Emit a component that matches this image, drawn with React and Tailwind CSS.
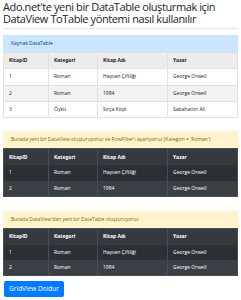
const kaynak = [
  ['1', 'Roman', 'Hayvan Çiftliği', 'George Orwell'],
  ['2', 'Roman', '1984', 'George Orwell'],
  ['3', 'Öykü', 'Sırça Köşk', 'Sabahattin Ali'],
]

const roman = kaynak.slice(0, 2)

const cols = ['KitapID', 'Kategori', 'Kitap Adı', 'Yazar']
const widths = ['w-[45px]', 'w-[49px]', 'w-[70px]', '']

function LightTable({ rows }) {
  return (
    <table className="w-full border-collapse border border-[#dee2e6] text-[5px] text-[#212529] table-fixed">
      <thead>
        <tr className="h-[16px] bg-[#ececec]">
          {cols.map((c, i) => (
            <th key={c} className={`${widths[i]} border border-[#dee2e6] px-[5px] text-left font-bold`}>{c}</th>
          ))}
        </tr>
      </thead>
      <tbody>
        {rows.map((r, idx) => (
          <tr key={idx} className={idx % 2 === 1 ? 'h-[16.3px] bg-[#f2f2f2]' : 'h-[16.3px] bg-white'}>
            {r.map((v, i) => (
              <td key={i} className="border border-[#dee2e6] px-[5px]">{v}</td>
            ))}
          </tr>
        ))}
      </tbody>
    </table>
  )
}

function DarkTable({ rows }) {
  return (
    <table className="w-full border-collapse border border-[#454d55] text-[5px] text-white table-fixed">
      <thead>
        <tr className="h-[16.5px] bg-[#343a40]">
          {cols.map((c, i) => (
            <th key={c} className={`${widths[i]} border-x border-[#454d55] px-[5px] text-left font-bold`}>{c}</th>
          ))}
        </tr>
      </thead>
      <tbody>
        {rows.map((r, idx) => (
          <tr key={idx} className={idx % 2 === 0 ? 'h-[15.5px] bg-[#2c3035]' : 'h-[15.5px] bg-[#3a3f45]'}>
            {r.map((v, i) => (
              <td key={i} className="border-x border-[#454d55] px-[5px]">{v}</td>
            ))}
          </tr>
        ))}
      </tbody>
    </table>
  )
}

export default function App() {
  return (
    <div className="w-[241px] h-[300px] bg-white px-[3px] font-['Open_Sans',sans-serif] overflow-hidden">
      <h2 className="pt-[1px] text-[11px] leading-[11.7px] font-medium text-[#212529] tracking-[-0.4px]">
        Ado.net'te yeni bir DataTable oluşturmak için DataView ToTable yöntemi nasıl kullanılır
      </h2>
      <hr className="mt-[4px] mb-[6px] border-t border-[#dfe6ee]" />

      <div className="h-[17px] flex items-center px-[8px] bg-[#cce5ff] text-[#004085] text-[5px] rounded-t-[1px]">
        Kaynak DataTable
      </div>
      <LightTable rows={kaynak} />

      <div className="mt-[13px] h-[17px] flex items-center px-[8px] bg-[#fff3cd] text-[#856404] text-[5px]">
        Burada yeni bir DataView oluşturuyoruz ve RowFilter'ı ayarlıyoruz (Kategori = 'Roman')
      </div>
      <DarkTable rows={roman} />

      <div className="mt-[14px] h-[17px] flex items-center px-[8px] bg-[#fff3cd] text-[#856404] text-[5px]">
        Burada DataView'dan yeni bir DataTable oluşturuyoruz
      </div>
      <DarkTable rows={roman} />

      <button className="mt-[5px] ml-[1px] w-[60px] h-[16px] rounded-[2px] bg-[#007bff] text-white text-[6.5px] flex items-center justify-center">
        GridView Doldur
      </button>
    </div>
  )
}
